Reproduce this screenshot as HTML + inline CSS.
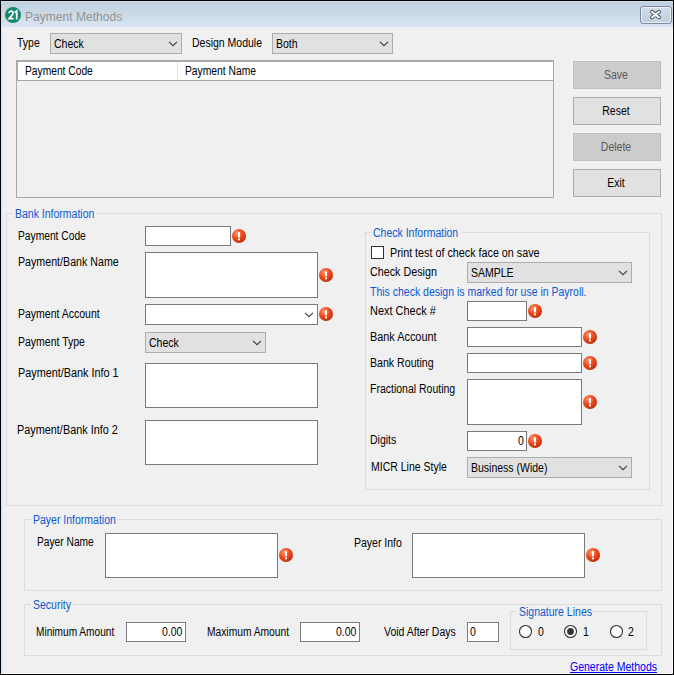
<!DOCTYPE html>
<html><head><meta charset="utf-8"><style>
html,body{margin:0;padding:0;width:674px;height:675px;overflow:hidden;background:#f0f0f0}
body>*{position:absolute}
.t{white-space:nowrap;line-height:15px;font-family:"Liberation Sans",sans-serif;transform-origin:0 0}
svg{overflow:visible}
</style></head><body>
<svg width="0" height="0" style="left:0;top:0"><defs><radialGradient id="gerr" cx="0.38" cy="0.32" r="0.75"><stop offset="0" stop-color="#ff9870"/><stop offset="0.5" stop-color="#ec4a1c"/><stop offset="0.85" stop-color="#c8340f"/><stop offset="1" stop-color="#8c2610"/></radialGradient></defs></svg>
<div style="left:0px;top:0px;width:674px;height:675px;background:#000"></div>
<div style="left:1px;top:1px;width:672px;height:26px;background:linear-gradient(#c0cfdc,#d8e5f3)"></div>
<div style="left:1px;top:1px;width:672px;height:1px;background:#cfdeeb"></div>
<div style="left:1px;top:27px;width:2px;height:647px;background:#dbe8f5"></div>
<div style="left:3px;top:27px;width:669px;height:646px;background:#f0f0f0"></div>
<div style="left:672px;top:27px;width:1px;height:647px;background:#fafcff"></div>
<div style="left:1px;top:673px;width:672px;height:1px;background:#fafcff"></div>
<svg style="left:5px;top:7px" width="16" height="16" viewBox="0 0 16 16"><circle cx="8" cy="8" r="8" fill="#14896a"/><path d="M3.9 6.2 Q4.3 4.2 6.1 4.2 Q8.0 4.2 8.0 6.0 Q8.0 7.3 6.6 8.6 L4.0 11.6 L8.5 11.6" fill="none" stroke="#fff" stroke-width="1.7" stroke-linejoin="miter"/><path d="M9.6 5.6 L11.7 4.1 L11.7 12.4" fill="none" stroke="#fff" stroke-width="1.8"/></svg>
<div class="t" style="left:25px;top:9.5px;color:#939393;font-size:12px;transform:scaleX(1.005);">Payment Methods</div>
<div style="left:640px;top:6px;width:32px;height:18px;box-sizing:border-box;border:1px solid #7d8aa3;border-radius:3px;background:linear-gradient(#d0dcea,#c3d1e0);box-shadow:inset 0 0 0 1px rgba(255,255,255,0.55)"></div>
<svg style="left:649px;top:9px" width="14" height="12" viewBox="0 0 14 12"><path d="M3 2.8 L10 8.3 M10 2.8 L3 8.3" stroke="#3c4250" stroke-width="3.8" stroke-linecap="round"/><path d="M3 2.8 L10 8.3 M10 2.8 L3 8.3" stroke="#f6f6f6" stroke-width="2.2" stroke-linecap="round"/></svg>
<div class="t" style="left:17px;top:36px;color:#000;font-size:12.5px;transform:scaleX(0.84);">Type</div>
<div style="left:50px;top:33px;width:132px;height:21px;background:#e1e1e1;border:1px solid #adadad;box-sizing:border-box"></div>
<svg style="left:168px;top:41px" width="10" height="6" viewBox="0 0 10 6"><path d="M1 0.8 L5 4.6 L9 0.8" fill="none" stroke="#404040" stroke-width="1.15"/></svg>
<div class="t" style="left:54px;top:37px;color:#000;font-size:12.5px;transform:scaleX(0.84);">Check</div>
<div class="t" style="left:192px;top:36px;color:#000;font-size:12.5px;transform:scaleX(0.84);">Design Module</div>
<div style="left:272px;top:33px;width:121px;height:21px;background:#e1e1e1;border:1px solid #adadad;box-sizing:border-box"></div>
<svg style="left:379px;top:41px" width="10" height="6" viewBox="0 0 10 6"><path d="M1 0.8 L5 4.6 L9 0.8" fill="none" stroke="#404040" stroke-width="1.15"/></svg>
<div class="t" style="left:276px;top:37px;color:#000;font-size:12.5px;transform:scaleX(0.84);">Both</div>
<div style="left:16px;top:60px;width:538px;height:138px;background:#f0f0f0;border:1px solid #a6a8ac;box-sizing:border-box"></div>
<div style="left:17px;top:61px;width:1px;height:20px;background:#ababab"></div>
<div style="left:17px;top:61px;width:536px;height:1px;background:#ababab"></div>
<div style="left:18px;top:62px;width:535px;height:18px;background:#fff"></div>
<div style="left:17px;top:80px;width:536px;height:1px;background:#a6a6a6"></div>
<div style="left:177px;top:62px;width:1px;height:18px;background:#e5e5e5"></div>
<div class="t" style="left:25px;top:64px;color:#000;font-size:12.5px;transform:scaleX(0.82);">Payment Code</div>
<div class="t" style="left:185px;top:64px;color:#000;font-size:12.5px;transform:scaleX(0.824);">Payment Name</div>
<div style="left:573px;top:61px;width:88px;height:28px;background:#cccccc;border:1px solid #bfbfbf;box-sizing:border-box"></div>
<div class="t" style="left:516px;width:200px;text-align:center;top:68px;color:#5a5a5a;font-size:12.5px;transform:scaleX(0.84);transform-origin:50% 0;">Save</div>
<div style="left:573px;top:97px;width:88px;height:28px;background:#e1e1e1;border:1px solid #adadad;box-sizing:border-box"></div>
<div class="t" style="left:516px;width:200px;text-align:center;top:104px;color:#000;font-size:12.5px;transform:scaleX(0.84);transform-origin:50% 0;">Reset</div>
<div style="left:573px;top:133px;width:88px;height:28px;background:#cccccc;border:1px solid #bfbfbf;box-sizing:border-box"></div>
<div class="t" style="left:516px;width:200px;text-align:center;top:140px;color:#5a5a5a;font-size:12.5px;transform:scaleX(0.84);transform-origin:50% 0;">Delete</div>
<div style="left:573px;top:169px;width:88px;height:28px;background:#e1e1e1;border:1px solid #adadad;box-sizing:border-box"></div>
<div class="t" style="left:516px;width:200px;text-align:center;top:176px;color:#000;font-size:12.5px;transform:scaleX(0.84);transform-origin:50% 0;">Exit</div>
<div style="left:6px;top:213px;width:656px;height:293px;border:1px solid #dcdcdc;box-sizing:border-box"></div>
<div style="left:13px;top:213px;width:84px;height:1px;background:#f0f0f0"></div>
<div class="t" style="left:15px;top:207px;color:#0c5ad2;font-size:12.5px;transform:scaleX(0.84);">Bank Information</div>
<div class="t" style="left:18px;top:229px;color:#000;font-size:12.5px;transform:scaleX(0.82);">Payment Code</div>
<div style="left:145px;top:226px;width:86px;height:20px;background:#fff;border:1px solid #7a7a7a;box-sizing:border-box"></div>
<svg style="left:231px;top:228px" width="16" height="16" viewBox="0 0 16 16"><circle cx="8" cy="8" r="7" fill="url(#gerr)"/><rect x="7" y="4.2" width="2" height="5.2" fill="#fff"/><rect x="7" y="10.5" width="2" height="1.8" fill="#fff"/></svg>
<div class="t" style="left:18px;top:255px;color:#000;font-size:12.5px;transform:scaleX(0.853);">Payment/Bank Name</div>
<div style="left:145px;top:252px;width:173px;height:46px;background:#fff;border:1px solid #7a7a7a;box-sizing:border-box"></div>
<svg style="left:318px;top:267px" width="16" height="16" viewBox="0 0 16 16"><circle cx="8" cy="8" r="7" fill="url(#gerr)"/><rect x="7" y="4.2" width="2" height="5.2" fill="#fff"/><rect x="7" y="10.5" width="2" height="1.8" fill="#fff"/></svg>
<div class="t" style="left:18px;top:307px;color:#000;font-size:12.5px;transform:scaleX(0.84);">Payment Account</div>
<div style="left:145px;top:304px;width:173px;height:21px;background:#fff;border:1px solid #7a7a7a;box-sizing:border-box"></div>
<svg style="left:304px;top:312px" width="10" height="6" viewBox="0 0 10 6"><path d="M1 0.8 L5 4.6 L9 0.8" fill="none" stroke="#404040" stroke-width="1.15"/></svg>
<svg style="left:318px;top:306px" width="16" height="16" viewBox="0 0 16 16"><circle cx="8" cy="8" r="7" fill="url(#gerr)"/><rect x="7" y="4.2" width="2" height="5.2" fill="#fff"/><rect x="7" y="10.5" width="2" height="1.8" fill="#fff"/></svg>
<div class="t" style="left:18px;top:335px;color:#000;font-size:12.5px;transform:scaleX(0.84);">Payment Type</div>
<div style="left:145px;top:332px;width:121px;height:21px;background:#e1e1e1;border:1px solid #adadad;box-sizing:border-box"></div>
<svg style="left:252px;top:340px" width="10" height="6" viewBox="0 0 10 6"><path d="M1 0.8 L5 4.6 L9 0.8" fill="none" stroke="#404040" stroke-width="1.15"/></svg>
<div class="t" style="left:149px;top:336px;color:#000;font-size:12.5px;transform:scaleX(0.84);">Check</div>
<div class="t" style="left:18px;top:366px;color:#000;font-size:12.5px;transform:scaleX(0.866);">Payment/Bank Info 1</div>
<div style="left:145px;top:363px;width:173px;height:45px;background:#fff;border:1px solid #7a7a7a;box-sizing:border-box"></div>
<div class="t" style="left:17px;top:423px;color:#000;font-size:12.5px;transform:scaleX(0.869);">Payment/Bank Info 2</div>
<div style="left:145px;top:420px;width:173px;height:45px;background:#fff;border:1px solid #7a7a7a;box-sizing:border-box"></div>
<div style="left:365px;top:232px;width:285px;height:258px;border:1px solid #dcdcdc;box-sizing:border-box"></div>
<div style="left:371px;top:232px;width:91px;height:1px;background:#f0f0f0"></div>
<div class="t" style="left:373px;top:226px;color:#0c5ad2;font-size:12.5px;transform:scaleX(0.84);">Check Information</div>
<div style="left:371px;top:246px;width:13px;height:13px;background:#fff;border:1px solid #333;box-sizing:border-box"></div>
<div class="t" style="left:390px;top:246px;color:#000;font-size:12.5px;transform:scaleX(0.861);">Print test of check face on save</div>
<div class="t" style="left:370px;top:265px;color:#000;font-size:12.5px;transform:scaleX(0.86);">Check Design</div>
<div style="left:467px;top:262px;width:165px;height:21px;background:#e1e1e1;border:1px solid #adadad;box-sizing:border-box"></div>
<svg style="left:618px;top:270px" width="10" height="6" viewBox="0 0 10 6"><path d="M1 0.8 L5 4.6 L9 0.8" fill="none" stroke="#404040" stroke-width="1.15"/></svg>
<div class="t" style="left:471px;top:266px;color:#000;font-size:12.5px;transform:scaleX(0.84);">SAMPLE</div>
<div class="t" style="left:370px;top:285px;color:#0c5ad2;font-size:12.5px;transform:scaleX(0.84);">This check design is marked for use in Payroll.</div>
<div class="t" style="left:370px;top:304px;color:#000;font-size:12.5px;transform:scaleX(0.877);">Next Check #</div>
<div style="left:467px;top:301px;width:60px;height:20px;background:#fff;border:1px solid #7a7a7a;box-sizing:border-box"></div>
<svg style="left:527px;top:303px" width="16" height="16" viewBox="0 0 16 16"><circle cx="8" cy="8" r="7" fill="url(#gerr)"/><rect x="7" y="4.2" width="2" height="5.2" fill="#fff"/><rect x="7" y="10.5" width="2" height="1.8" fill="#fff"/></svg>
<div class="t" style="left:370px;top:330px;color:#000;font-size:12.5px;transform:scaleX(0.87);">Bank Account</div>
<div style="left:467px;top:327px;width:115px;height:20px;background:#fff;border:1px solid #7a7a7a;box-sizing:border-box"></div>
<svg style="left:582px;top:329px" width="16" height="16" viewBox="0 0 16 16"><circle cx="8" cy="8" r="7" fill="url(#gerr)"/><rect x="7" y="4.2" width="2" height="5.2" fill="#fff"/><rect x="7" y="10.5" width="2" height="1.8" fill="#fff"/></svg>
<div class="t" style="left:370px;top:356px;color:#000;font-size:12.5px;transform:scaleX(0.848);">Bank Routing</div>
<div style="left:467px;top:353px;width:115px;height:20px;background:#fff;border:1px solid #7a7a7a;box-sizing:border-box"></div>
<svg style="left:582px;top:355px" width="16" height="16" viewBox="0 0 16 16"><circle cx="8" cy="8" r="7" fill="url(#gerr)"/><rect x="7" y="4.2" width="2" height="5.2" fill="#fff"/><rect x="7" y="10.5" width="2" height="1.8" fill="#fff"/></svg>
<div class="t" style="left:370px;top:382px;color:#000;font-size:12.5px;transform:scaleX(0.84);">Fractional Routing</div>
<div style="left:467px;top:379px;width:115px;height:46px;background:#fff;border:1px solid #7a7a7a;box-sizing:border-box"></div>
<svg style="left:582px;top:394px" width="16" height="16" viewBox="0 0 16 16"><circle cx="8" cy="8" r="7" fill="url(#gerr)"/><rect x="7" y="4.2" width="2" height="5.2" fill="#fff"/><rect x="7" y="10.5" width="2" height="1.8" fill="#fff"/></svg>
<div class="t" style="left:370px;top:433px;color:#000;font-size:12.5px;transform:scaleX(0.84);">Digits</div>
<div style="left:467px;top:431px;width:60px;height:20px;background:#fff;border:1px solid #7a7a7a;box-sizing:border-box"></div>
<svg style="left:527px;top:433px" width="16" height="16" viewBox="0 0 16 16"><circle cx="8" cy="8" r="7" fill="url(#gerr)"/><rect x="7" y="4.2" width="2" height="5.2" fill="#fff"/><rect x="7" y="10.5" width="2" height="1.8" fill="#fff"/></svg>
<div class="t" style="right:150px;top:434px;color:#000;font-size:12.5px;transform:scaleX(0.84);transform-origin:100% 0;">0</div>
<div class="t" style="left:371px;top:460px;color:#000;font-size:12.5px;transform:scaleX(0.84);">MICR Line Style</div>
<div style="left:467px;top:457px;width:165px;height:21px;background:#e1e1e1;border:1px solid #adadad;box-sizing:border-box"></div>
<svg style="left:618px;top:465px" width="10" height="6" viewBox="0 0 10 6"><path d="M1 0.8 L5 4.6 L9 0.8" fill="none" stroke="#404040" stroke-width="1.15"/></svg>
<div class="t" style="left:471px;top:461px;color:#000;font-size:12.5px;transform:scaleX(0.84);">Business (Wide)</div>
<div style="left:24px;top:519px;width:638px;height:72px;border:1px solid #dcdcdc;box-sizing:border-box"></div>
<div style="left:31px;top:519px;width:87px;height:1px;background:#f0f0f0"></div>
<div class="t" style="left:33px;top:513px;color:#0c5ad2;font-size:12.5px;transform:scaleX(0.84);">Payer Information</div>
<div class="t" style="left:37px;top:535px;color:#000;font-size:12.5px;transform:scaleX(0.817);">Payer Name</div>
<div style="left:105px;top:533px;width:173px;height:45px;background:#fff;border:1px solid #7a7a7a;box-sizing:border-box"></div>
<svg style="left:278px;top:547px" width="16" height="16" viewBox="0 0 16 16"><circle cx="8" cy="8" r="7" fill="url(#gerr)"/><rect x="7" y="4.2" width="2" height="5.2" fill="#fff"/><rect x="7" y="10.5" width="2" height="1.8" fill="#fff"/></svg>
<div class="t" style="left:354px;top:536px;color:#000;font-size:12.5px;transform:scaleX(0.84);">Payer Info</div>
<div style="left:412px;top:533px;width:173px;height:45px;background:#fff;border:1px solid #7a7a7a;box-sizing:border-box"></div>
<svg style="left:585px;top:547px" width="16" height="16" viewBox="0 0 16 16"><circle cx="8" cy="8" r="7" fill="url(#gerr)"/><rect x="7" y="4.2" width="2" height="5.2" fill="#fff"/><rect x="7" y="10.5" width="2" height="1.8" fill="#fff"/></svg>
<div style="left:24px;top:604px;width:638px;height:52px;border:1px solid #dcdcdc;box-sizing:border-box"></div>
<div style="left:30px;top:604px;width:43px;height:1px;background:#f0f0f0"></div>
<div class="t" style="left:32.5px;top:598px;color:#0c5ad2;font-size:12.5px;transform:scaleX(0.84);">Security</div>
<div class="t" style="left:36px;top:625px;color:#000;font-size:12.5px;transform:scaleX(0.81);">Minimum Amount</div>
<div style="left:126px;top:622px;width:60px;height:20px;background:#fff;border:1px solid #7a7a7a;box-sizing:border-box"></div>
<div class="t" style="right:491.6px;top:625px;color:#000;font-size:12.5px;transform:scaleX(0.84);transform-origin:100% 0;">0.00</div>
<div class="t" style="left:207px;top:625px;color:#000;font-size:12.5px;transform:scaleX(0.82);">Maximum Amount</div>
<div style="left:300px;top:622px;width:60px;height:20px;background:#fff;border:1px solid #7a7a7a;box-sizing:border-box"></div>
<div class="t" style="right:317.6px;top:625px;color:#000;font-size:12.5px;transform:scaleX(0.84);transform-origin:100% 0;">0.00</div>
<div class="t" style="left:384px;top:625px;color:#000;font-size:12.5px;transform:scaleX(0.84);">Void After Days</div>
<div style="left:467px;top:622px;width:32px;height:20px;background:#fff;border:1px solid #7a7a7a;box-sizing:border-box"></div>
<div class="t" style="left:470px;top:625px;color:#000;font-size:12.5px;transform:scaleX(0.84);">0</div>
<div style="left:510px;top:611px;width:137px;height:39px;border:1px solid #dcdcdc;box-sizing:border-box"></div>
<div style="left:516px;top:611px;width:77px;height:1px;background:#f0f0f0"></div>
<div class="t" style="left:518.5px;top:605px;color:#0c5ad2;font-size:12.5px;transform:scaleX(0.84);">Signature Lines</div>
<svg style="left:518px;top:625px" width="14" height="14" viewBox="0 0 14 14"><circle cx="7.5" cy="6.5" r="6" fill="#fff" stroke="#333" stroke-width="1.1"/></svg>
<div class="t" style="left:538px;top:625px;color:#000;font-size:12.5px;transform:scaleX(0.84);">0</div>
<svg style="left:563px;top:625px" width="14" height="14" viewBox="0 0 14 14"><circle cx="7.5" cy="6.5" r="6" fill="#fff" stroke="#333" stroke-width="1.1"/><circle cx="7.5" cy="6.5" r="3.4" fill="#333"/></svg>
<div class="t" style="left:583px;top:625px;color:#000;font-size:12.5px;transform:scaleX(0.84);">1</div>
<svg style="left:609px;top:625px" width="14" height="14" viewBox="0 0 14 14"><circle cx="7.5" cy="6.5" r="6" fill="#fff" stroke="#333" stroke-width="1.1"/></svg>
<div class="t" style="left:628px;top:625px;color:#000;font-size:12.5px;transform:scaleX(0.84);">2</div>
<div class="t" style="left:570px;top:660px;color:#0000ff;font-size:12.5px;transform:scaleX(0.84);text-decoration:underline">Generate Methods</div>
</body></html>
